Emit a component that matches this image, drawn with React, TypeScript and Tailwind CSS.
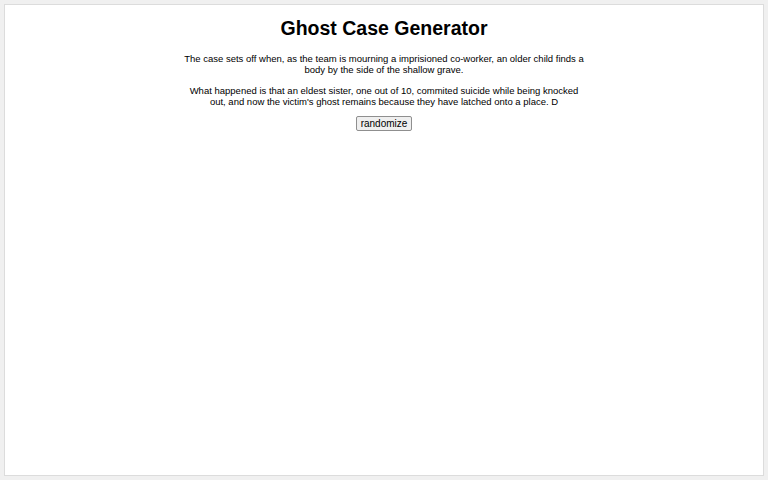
import { useState } from "react";

const openings = [
  "The case sets off when, as the team is mourning a imprisioned co-worker, an older child finds a body by the side of the shallow grave.",
];

const backstories = [
  "What happened is that an eldest sister, one out of 10, commited suicide while being knocked out, and now the victim's ghost remains because they have latched onto a place. D",
];

function App() {
  const [idx, setIdx] = useState(0);

  return (
    <div className="min-h-[480px] bg-[#f0f0f0] p-[4px] font-['Liberation_Sans',Arial,sans-serif] text-black">
      <div className="min-h-[472px] border border-[#dcdcdc] bg-white flex flex-col items-center pt-[13px]">
        <h1 className="text-[19.5px] font-bold leading-[20px]">Ghost Case Generator</h1>
        <p className="mt-[15px] w-[406px] text-center text-[9.5px] leading-[11px]">
          {openings[idx % openings.length]}
        </p>
        <p className="mt-[10px] w-[406px] text-center text-[9.5px] leading-[11px]">
          {backstories[idx % backstories.length]}
        </p>
        <button
          className="mt-[9px] rounded-[2px] border border-[#8f8f8f] bg-[#efefef] px-[4px] text-[10px] leading-[13px]"
          onClick={() => setIdx(idx + 1)}
        >
          randomize
        </button>
      </div>
    </div>
  );
}

export default App;
